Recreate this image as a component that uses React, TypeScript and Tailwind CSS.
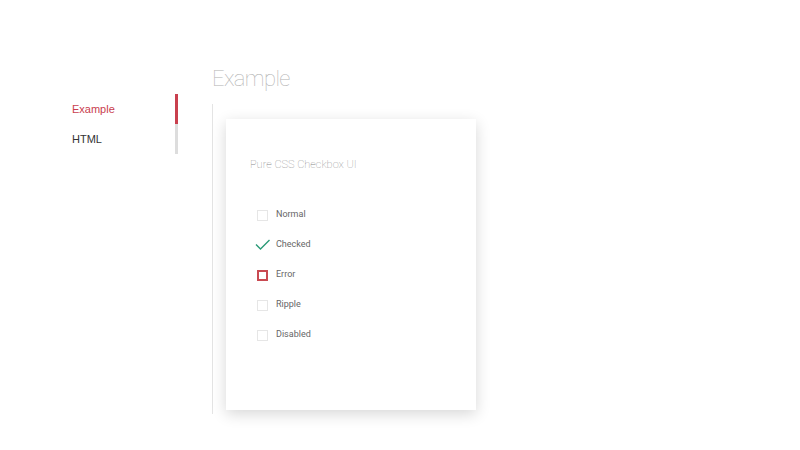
import React from "react";

type Box = "normal" | "checked" | "error" | "ripple" | "disabled";

const rows: { label: string; kind: Box }[] = [
  { label: "Normal", kind: "normal" },
  { label: "Checked", kind: "checked" },
  { label: "Error", kind: "error" },
  { label: "Ripple", kind: "ripple" },
  { label: "Disabled", kind: "disabled" },
];

const CheckBox = ({ kind }: { kind: Box }) => {
  if (kind === "checked") {
    return (
      <svg width="16" height="12" viewBox="0 0 16 12" className="-ml-[2px] -mr-[3px]">
        <path d="M1 5.5 L5.5 10 L14.5 1" fill="none" stroke="#2b9a77" strokeWidth="1.4" />
      </svg>
    );
  }
  if (kind === "error") {
    return <div className="h-[11px] w-[11px] border-2 border-[#c94a52]" />;
  }
  return <div className="h-[11px] w-[11px] border border-[#e6e6e6]" />;
};

export default function App() {
  return (
    <div className="flex h-[450px] w-[800px] bg-white pl-[72px] font-['Liberation_Sans',sans-serif]">
      <nav className="mt-[94px] flex w-[106px] flex-col self-start text-[11px]">
        <a className="flex h-[30px] items-center border-r-[3px] border-[#c9404e] text-[#c9404e]">Example</a>
        <a className="flex h-[30px] items-center border-r-[3px] border-[#dddddd] text-[#333]">HTML</a>
      </nav>
      <main className="ml-[34px] flex flex-col pt-[64px]">
        <h1 className="font-['Roboto',sans-serif] text-[22px] leading-[30px] font-thin tracking-[-0.6px] text-[#b3b3b3]">
          Example
        </h1>
        <section className="mt-[10px] border-l border-[#e4e4e4] pt-[15px] pb-[4px] pl-[13px]">
          <div className="h-[291px] w-[250px] bg-white pt-[38px] pl-[24px] shadow-[0_4px_14px_rgba(0,0,0,0.16)]">
            <h2 className="font-['Roboto',sans-serif] text-[11px] leading-[16px] font-thin text-[#888]">
              Pure CSS Checkbox UI
            </h2>
            <ul className="mt-[27px] ml-[7px] flex flex-col font-['Roboto',sans-serif] text-[9px] font-normal text-[#666]">
              {rows.map((r) => (
                <li key={r.label} className="flex h-[30px] items-center gap-[8px]">
                  <CheckBox kind={r.kind} />
                  <span>{r.label}</span>
                </li>
              ))}
            </ul>
          </div>
        </section>
      </main>
    </div>
  );
}
